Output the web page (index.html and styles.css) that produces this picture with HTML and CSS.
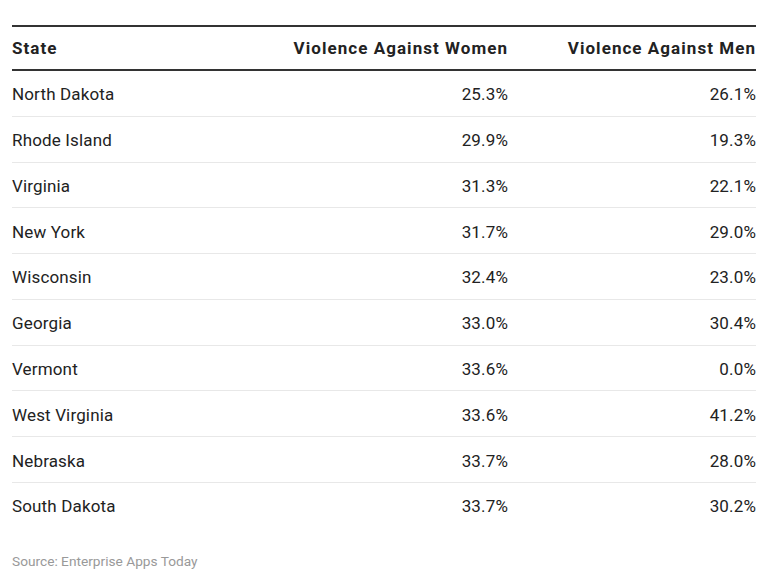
FILE: index.html
```html
<!DOCTYPE html>
<html>
<head>
<meta charset="utf-8">
<link rel="stylesheet" href="styles.css">
</head>
<body>
<div class="wrap">
  <table class="data">
    <thead>
      <tr><th class="c1">State</th><th class="num">Violence Against Women</th><th class="num">Violence Against Men</th></tr>
    </thead>
    <tbody>
      <tr><td>North Dakota</td><td class="num">25.3%</td><td class="num">26.1%</td></tr>
      <tr><td>Rhode Island</td><td class="num">29.9%</td><td class="num">19.3%</td></tr>
      <tr><td>Virginia</td><td class="num">31.3%</td><td class="num">22.1%</td></tr>
      <tr><td>New York</td><td class="num">31.7%</td><td class="num">29.0%</td></tr>
      <tr><td>Wisconsin</td><td class="num">32.4%</td><td class="num">23.0%</td></tr>
      <tr><td>Georgia</td><td class="num">33.0%</td><td class="num">30.4%</td></tr>
      <tr><td>Vermont</td><td class="num">33.6%</td><td class="num">0.0%</td></tr>
      <tr><td>West Virginia</td><td class="num">33.6%</td><td class="num">41.2%</td></tr>
      <tr><td>Nebraska</td><td class="num">33.7%</td><td class="num">28.0%</td></tr>
      <tr><td>South Dakota</td><td class="num">33.7%</td><td class="num">30.2%</td></tr>
    </tbody>
  </table>
  <div class="source">Source: Enterprise Apps Today</div>
</div>
</body>
</html>
```
FILE: styles.css
```css
html, body {
  margin: 0;
  padding: 0;
  background: #ffffff;
}
body {
  font-family: Roboto, "Liberation Sans", sans-serif;
  color: #222222;
}
.wrap {
  padding: 25px 12px 0 12px;
}
.data {
  width: 744px;
  border-collapse: collapse;
  table-layout: fixed;
  border-top: 2px solid #333333;
  font-size: 17px;
}
.data th, .data td {
  width: 248px;
  padding: 0;
  text-align: left;
  vertical-align: middle;
}
.data th {
  height: 42px;
  font-weight: 700;
  letter-spacing: 1.05px;
  border-bottom: 2px solid #333333;
}
.data td {
  height: 42.78px;
  padding-top: 2px;
  font-weight: 400;
  letter-spacing: 0.15px;
  border-bottom: 1px solid #e8e8e8;
}
.data tbody tr:last-child td {
  border-bottom: none;
}
.data .num {
  text-align: right;
}
.source {
  margin-top: 25px;
  font-size: 13.7px;
  color: #999999;
}
```
